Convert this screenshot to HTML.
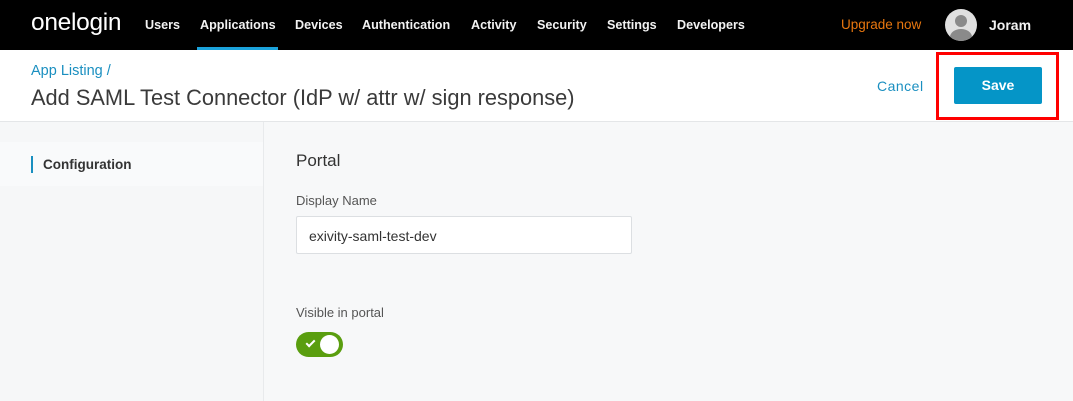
<!DOCTYPE html><html><head><style>
*{margin:0;padding:0;box-sizing:border-box}
body{width:1073px;height:401px;overflow:hidden;font-family:"Liberation Sans",sans-serif;background:#f7f8f9;position:relative}
.nav{position:absolute;left:0;top:0;width:1073px;height:50px;background:#000;color:#fff}
.logo{position:absolute;left:31px;top:9px;font-size:24.5px;letter-spacing:-0.3px;color:#fff}
.nav a{position:absolute;top:18px;font-size:12.6px;font-weight:bold;color:#f2f2f2}
.ul{position:absolute;left:197px;top:47px;width:81px;height:3px;background:#1ba3dc}
.hdr{position:absolute;left:0;top:50px;width:1073px;height:72px;background:#fff;border-bottom:1px solid #e4e6e8}
.side{position:absolute;left:0;top:122px;width:264px;height:279px;background:#f6f7f8;border-right:1px solid #e8eaec}
.item{position:absolute;left:0;top:142px;width:263px;height:44px;background:#f9fafb}
</style></head><body>
<div class="nav">
<div class="logo">onelogin</div>
<a style="left:145px">Users</a><a style="left:200px">Applications</a><a style="left:295px">Devices</a><a style="left:362px">Authentication</a><a style="left:471px">Activity</a><a style="left:537px">Security</a><a style="left:607px">Settings</a><a style="left:677px">Developers</a>
<a style="left:841px;color:#e8770f;font-weight:normal;font-size:13.5px;top:17px">Upgrade now</a>
<div style="position:absolute;left:945px;top:9px;width:32px;height:32px;border-radius:50%;background:#e0e0e0;overflow:hidden"><div style="position:absolute;left:10px;top:6px;width:12px;height:12px;border-radius:50%;background:#8a8a8a"></div><div style="position:absolute;left:5px;top:20px;width:22px;height:16px;border-radius:50% 50% 0 0;background:#8a8a8a"></div></div>
<a style="left:989px;font-size:14px;top:17px">Joram</a>
<div class="ul"></div>
</div>
<div class="hdr">
<div style="position:absolute;left:31px;top:13px;font-size:14.5px;color:#1a8fc0">App Listing /</div>
<div style="position:absolute;left:31px;top:35px;font-size:21.8px;color:#3a3a3a">Add SAML Test Connector (IdP w/ attr w/ sign response)</div>
<div style="position:absolute;left:877px;top:28px;font-size:14px;color:#1a8fc0;letter-spacing:0.5px">Cancel</div>
<div style="position:absolute;left:954px;top:17px;width:88px;height:37px;background:#0595c7;border-radius:2px;color:#fff;font-weight:bold;font-size:14px;text-align:center;line-height:37px">Save</div>
<div style="position:absolute;left:936px;top:2px;width:123px;height:68px;border:3px solid #f00"></div>
</div>
<div class="side"></div>
<div class="item"><div style="position:absolute;left:31px;top:14px;width:2px;height:17px;background:#1a8fc0"></div><div style="position:absolute;left:43px;top:15px;font-size:13.5px;font-weight:bold;color:#333">Configuration</div></div>
<div style="position:absolute;left:296px;top:151px;font-size:17px;color:#333">Portal</div>
<div style="position:absolute;left:296px;top:193px;font-size:13px;color:#555">Display Name</div>
<div style="position:absolute;left:296px;top:216px;width:336px;height:38px;background:#fff;border:1px solid #dcdfe2;border-radius:2px;font-size:14px;color:#333;padding:11px 12px">exivity-saml-test-dev</div>
<div style="position:absolute;left:296px;top:305px;font-size:13px;color:#555">Visible in portal</div>
<div style="position:absolute;left:296px;top:332px;width:47px;height:25px;border-radius:13px;background:#5a9e0f"><div style="position:absolute;left:10px;top:8px;width:9px;height:5px;border-left:2px solid #fff;border-bottom:2px solid #fff;transform:rotate(-45deg)"></div><div style="position:absolute;left:24px;top:3px;width:19px;height:19px;border-radius:50%;background:#fff"></div></div>
</body></html>
